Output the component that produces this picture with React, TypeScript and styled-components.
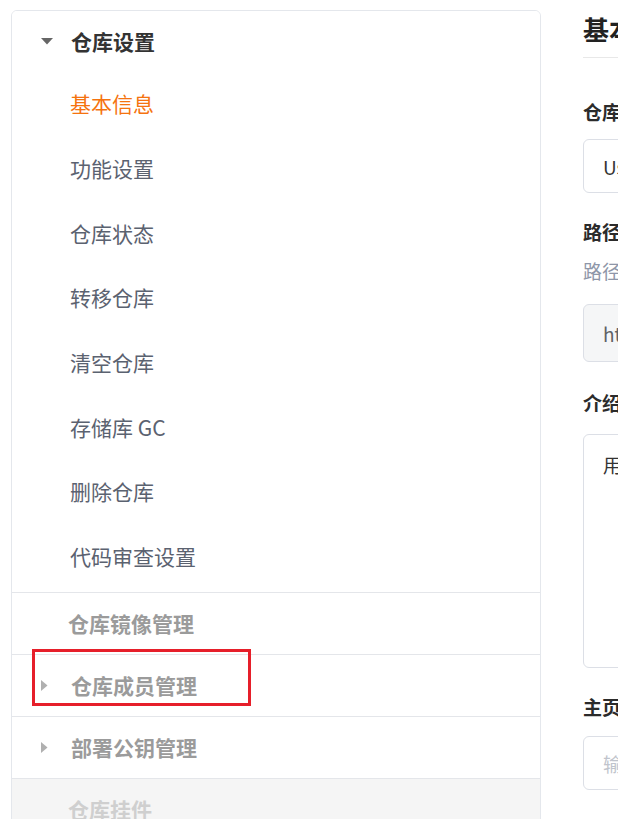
import React from "react";
import styled, { createGlobalStyle } from "styled-components";

const Global = createGlobalStyle`
  html, body { margin: 0; padding: 0; overflow: hidden; background: #fff; }
  body { font-family: "Noto Sans CJK SC", "Noto Sans", sans-serif; }
`;

const Page = styled.div`
  display: flex;
  align-items: flex-start;
  padding: 10px 0 0 11px;
  width: 1200px;
`;

const Sidebar = styled.nav`
  width: 528px;
  flex: none;
  border: 1px solid #e4e7ec;
  border-radius: 6px;
  overflow: hidden;
  background: #fff;
`;

const GroupHeader = styled.div<{ $muted?: boolean; $disabled?: boolean }>`
  position: relative;
  display: flex;
  align-items: center;
  height: ${(p) => (p.$disabled ? "60px" : "61px")};
  padding-left: 29px;
  font-size: 21px;
  font-weight: 700;
  color: ${(p) => (p.$disabled ? "#cfcfcf" : p.$muted ? "#9b9b9b" : "#333")};
  background: ${(p) => (p.$disabled ? "#f5f5f5" : "#fff")};
  & + & {
    border-top: 1px solid #e4e6ea;
  }
`;

const FirstHeader = styled(GroupHeader)`
  height: 60px;
`;

const Caret = styled.span`
  width: 30px;
  display: flex;
  align-items: center;
  justify-content: flex-start;
  flex: none;
  svg { display: block; }
`;

const NoCaret = styled.span`
  width: 27px;
  flex: none;
`;

const ItemList = styled.ul`
  list-style: none;
  margin: 0;
  padding: 0 0 3px;
`;

const Item = styled.li<{ $active?: boolean }>`
  height: 64.7px;
  display: flex;
  align-items: center;
  padding-left: 58px;
  font-size: 21px;
  color: ${(p) => (p.$active ? "#f5730f" : "#5b6270")};
`;

const Section = styled.div`
  border-top: 1px solid #e4e6ea;
`;

const Highlight = styled.div`
  position: absolute;
  left: 20px;
  top: -6px;
  width: 213px;
  height: 51px;
  border: 3px solid #e61f2a;
`;

const Main = styled.main`
  margin-left: 42px;
  width: 560px;
  flex: none;
`;

const Title = styled.h2`
  margin: 0;
  font-size: 26px;
  font-weight: 700;
  color: #222;
  line-height: 38px;
  padding-bottom: 9px;
  border-bottom: 1px solid #e8e8e8;
`;

const Field = styled.div<{ $top: number }>`
  margin-top: ${(p) => p.$top}px;
`;

const Label = styled.label`
  display: block;
  font-size: 19px;
  font-weight: 700;
  color: #2b2b2b;
  line-height: 28px;
`;

const Help = styled.div`
  font-size: 19px;
  color: #8e96a8;
  line-height: 28px;
  margin-top: 11px;
`;

const Input = styled.div<{ $disabled?: boolean; $placeholder?: boolean; $top: number }>`
  box-sizing: border-box;
  margin-top: ${(p) => p.$top}px;
  height: ${(p) => (p.$disabled ? "58px" : "54px")};
  display: flex;
  align-items: center;
  padding-left: 19px;
  border: 1px solid #dcdfe6;
  border-radius: 6px;
  font-size: 19px;
  color: ${(p) => (p.$placeholder ? "#c0c4cc" : p.$disabled ? "#606266" : "#333")};
  background: ${(p) => (p.$disabled ? "#f5f6f7" : "#fff")};
  white-space: nowrap;
`;

const TextArea = styled.div<{ $top: number }>`
  box-sizing: border-box;
  margin-top: ${(p) => p.$top}px;
  height: 234px;
  padding: 16px 19px;
  border: 1px solid #dcdfe6;
  border-radius: 6px;
  font-size: 19px;
  line-height: 28px;
  color: #333;
`;

const CaretDown = () => (
  <svg width="12" height="7" viewBox="0 0 12 7">
    <path d="M0 0 H12 L6 6.5 Z" fill="#666" />
  </svg>
);

const CaretRight = () => (
  <svg width="7" height="11" viewBox="0 0 7 11">
    <path d="M0 0 L6.5 5.5 L0 11 Z" fill="#b0b0b0" />
  </svg>
);

const items = [
  "基本信息",
  "功能设置",
  "仓库状态",
  "转移仓库",
  "清空仓库",
  "存储库 GC",
  "删除仓库",
  "代码审查设置",
];

export default function App() {
  return (
    <>
      <Global />
      <Page>
        <Sidebar>
          <FirstHeader>
            <Caret>
              <CaretDown />
            </Caret>
            仓库设置
          </FirstHeader>
          <ItemList>
            {items.map((t, i) => (
              <Item key={t} $active={i === 0}>
                {t}
              </Item>
            ))}
          </ItemList>
          <Section>
            <GroupHeader $muted>
              <NoCaret />
              仓库镜像管理
            </GroupHeader>
            <GroupHeader $muted>
              <Caret>
                <CaretRight />
              </Caret>
              仓库成员管理
              <Highlight />
            </GroupHeader>
            <GroupHeader $muted>
              <Caret>
                <CaretRight />
              </Caret>
              部署公钥管理
            </GroupHeader>
            <GroupHeader $muted $disabled>
              <NoCaret />
              仓库挂件
            </GroupHeader>
          </Section>
        </Sidebar>
        <Main>
          <Title>基本信息</Title>
          <Field $top={40}>
            <Label>仓库名称</Label>
            <Input $top={13}>UserCenter</Input>
          </Field>
          <Field $top={25}>
            <Label>路径</Label>
            <Help>路径只允许包含字母、数字或者下划线(_)、中划线(-)、英文句号(.)</Help>
            <Input $top={19} $disabled>https://gitee.com/user/usercenter</Input>
          </Field>
          <Field $top={27}>
            <Label>介绍</Label>
            <TextArea $top={17}>用户中心服务</TextArea>
          </Field>
          <Field $top={25}>
            <Label>主页</Label>
            <Input $top={15} $placeholder>输入主页地址</Input>
          </Field>
        </Main>
      </Page>
    </>
  );
}
